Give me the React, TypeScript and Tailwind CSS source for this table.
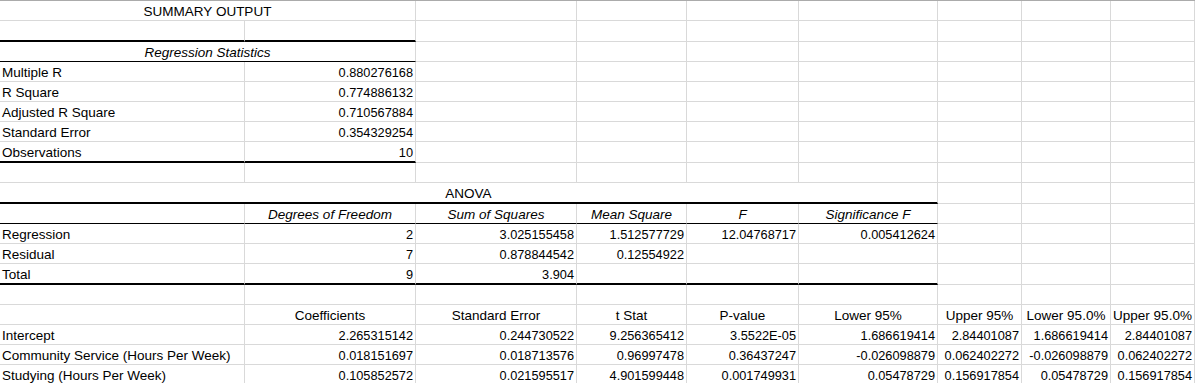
type Edge = 'gray' | 'thin' | 'thick';
type Cell = {
  t?: string;
  span?: 1 | 2 | 6;
  al?: 'l' | 'c' | 'r';
  it?: boolean;
  b?: Edge;
};

const spanCls = { 1: '', 2: 'col-span-2', 6: 'col-span-6' };
const alCls = { l: 'justify-start pl-[2px]', c: 'justify-center', r: 'justify-end pr-[2px]' };
const edgeCls = {
  gray: 'border-b border-[#d9d9d9]',
  thin: 'border-b border-black',
  thick: 'border-b-2 border-black',
};

// helpers for common rows
const blank = (n: number, b: Edge = 'gray'): Cell[] => Array.from({ length: n }, () => ({ b }));
const lbl = (t: string, b: Edge = 'gray'): Cell => ({ t, al: 'l', b });
const num = (t: string, b: Edge = 'gray'): Cell => ({ t, al: 'r', b });
const hdr = (t: string, it = false, b: Edge = 'gray'): Cell => ({ t, al: 'c', it, b });

const rows: Cell[][] = [
  [{ t: 'SUMMARY OUTPUT', span: 2, al: 'c' }, ...blank(7)],
  [...blank(2, 'thick'), ...blank(7)],
  [{ t: 'Regression Statistics', span: 2, al: 'c', it: true, b: 'thin' }, ...blank(7)],
  [lbl('Multiple R'), num('0.880276168'), ...blank(7)],
  [lbl('R Square'), num('0.774886132'), ...blank(7)],
  [lbl('Adjusted R Square'), num('0.710567884'), ...blank(7)],
  [lbl('Standard Error'), num('0.354329254'), ...blank(7)],
  [lbl('Observations', 'thick'), num('10', 'thick'), ...blank(7)],
  blank(9),
  [{ t: 'ANOVA', span: 6, al: 'c', b: 'thick' }, ...blank(3)],
  [
    { b: 'thin' },
    hdr('Degrees of Freedom', true, 'thin'),
    hdr('Sum of Squares', true, 'thin'),
    hdr('Mean Square', true, 'thin'),
    hdr('F', true, 'thin'),
    hdr('Significance F', true, 'thin'),
    ...blank(3),
  ],
  [lbl('Regression'), num('2'), num('3.025155458'), num('1.512577729'), num('12.04768717'), num('0.005412624'), ...blank(3)],
  [lbl('Residual'), num('7'), num('0.878844542'), num('0.12554922'), ...blank(2), ...blank(3)],
  [lbl('Total', 'thick'), num('9', 'thick'), num('3.904', 'thick'), ...blank(3, 'thick'), ...blank(3)],
  blank(9),
  [
    {},
    hdr('Coefficients'),
    hdr('Standard Error'),
    hdr('t Stat'),
    hdr('P-value'),
    hdr('Lower 95%'),
    hdr('Upper 95%'),
    hdr('Lower 95.0%'),
    hdr('Upper 95.0%'),
  ],
  [lbl('Intercept'), ...['2.265315142', '0.244730522', '9.256365412', '3.5522E-05', '1.686619414', '2.84401087', '1.686619414', '2.84401087'].map((v) => num(v))],
  [
    lbl('Community Service (Hours Per Week)'),
    ...['0.018151697', '0.018713576', '0.96997478', '0.36437247', '-0.026098879', '0.062402272', '-0.026098879', '0.062402272'].map((v) => num(v)),
  ],
  [
    lbl('Studying (Hours Per Week)'),
    ...['0.105852572', '0.021595517', '4.901599448', '0.001749931', '0.05478729', '0.156917854', '0.05478729', '0.156917854'].map((v) => num(v)),
  ],
];

function SheetCell({ c }: { c: Cell }) {
  const isNum = c.al === 'r';
  return (
    <div
      className={`flex items-end overflow-hidden whitespace-nowrap border-r border-r-[#d9d9d9] pb-[1px] leading-[15px] ${spanCls[c.span ?? 1]} ${alCls[c.al ?? 'l']} ${edgeCls[c.b ?? 'gray']} ${c.it ? 'italic' : ''} ${isNum ? 'text-[12.75px]' : 'text-[13.5px]'}`}
    >
      {c.t}
    </div>
  );
}

export default function App() {
  return (
    <div className="h-[383px] w-[1195px] overflow-hidden bg-white font-['Liberation_Sans',Arial,sans-serif] text-black">
      <div className="grid grid-cols-[245px_171px_161px_110px_112px_139px_84px_89px_84px] grid-rows-[20px_21px_20px_20px_20px_20px_20px_21px_20px_21px_20px_20px_20px_21px_20px_20px_20px_20px_20px] border-t border-[#ababab]">
        {rows.map((r, i) => r.map((c, j) => <SheetCell key={`${i}-${j}`} c={c} />))}
      </div>
    </div>
  );
}
